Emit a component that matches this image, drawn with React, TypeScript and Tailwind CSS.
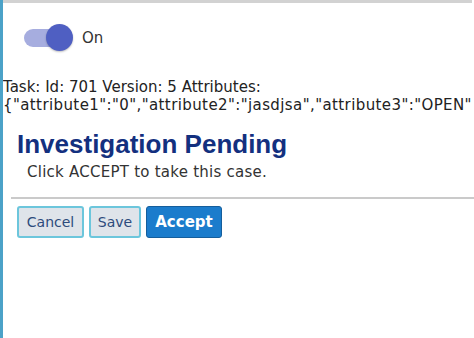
export default function App() {
  return (
    <div className="w-[474px] h-[338px] overflow-hidden bg-white border-l-[3px] border-[#4ba2c8] font-['DejaVu_Sans',sans-serif]">
      <div className="h-[3px] bg-[#d2d2d2] mr-[2px]" />
      <div className="flex items-center mt-[21px] ml-[21px] h-[28px]">
        <div className="relative w-[44px] h-[18px] rounded-full bg-[#a6addf]">
          <span className="absolute right-[-5px] top-[-5px] w-[27px] h-[27px] rounded-full bg-[#4f5fc2] shadow-[0_1px_2px_rgba(0,0,0,0.25)]" />
        </div>
        <span className="ml-[14px] text-[15px] text-[#333]">On</span>
      </div>
      <div className="mt-[26px] text-[15px] leading-[18px] text-[#222] whitespace-nowrap">
        <div>Task: Id: 701 Version: 5 Attributes:</div>
        <div className="tracking-[0.4px]">{'{"attribute1":"0","attribute2":"jasdjsa","attribute3":"OPEN"'}</div>
      </div>
      <div className="ml-[14px] mt-[15px]">
        <h1 className="text-[26px] leading-[30px] font-bold text-[#13307f] font-['Liberation_Sans',Arial,sans-serif]">
          Investigation Pending
        </h1>
        <p className="ml-[10px] mt-[4px] text-[15px] leading-[18px] text-[#333] tracking-[0.25px]">
          Click ACCEPT to take this case.
        </p>
      </div>
      <div className="ml-[8px] mt-[16px] h-[2px] bg-[#cacaca]" />
      <div className="flex gap-[5px] ml-[14px] mt-[7px]">
        <button className="w-[67px] h-[32px] rounded-[3px] border-2 border-[#6cc6dc] bg-[#dfe4ea] text-[14px] text-[#2d4b7c]">
          Cancel
        </button>
        <button className="w-[52px] h-[32px] rounded-[3px] border-2 border-[#6cc6dc] bg-[#dfe4ea] text-[14px] text-[#2d4b7c]">
          Save
        </button>
        <button className="w-[76px] h-[32px] rounded-[3px] border border-[#155e9c] bg-[#1b7ccc] text-[15px] font-bold text-white">
          Accept
        </button>
      </div>
    </div>
  );
}
